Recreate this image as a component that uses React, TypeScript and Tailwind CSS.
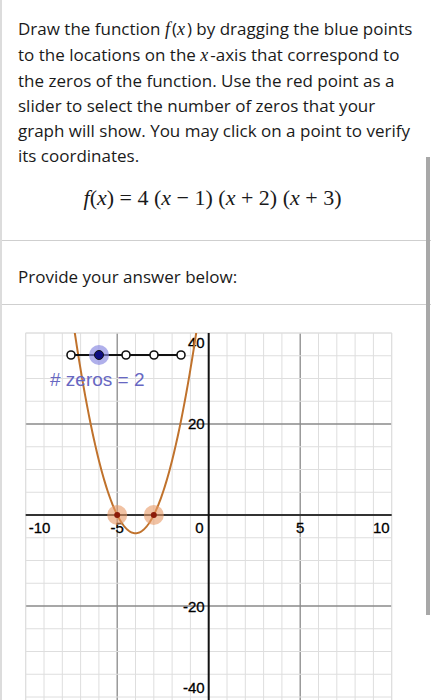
import React from "react";

const X0 = 206.7;
const UX = 18.3;
const Y0 = 515;
const UY = 4.55;

const px = (x: number) => X0 + x * UX;
const py = (y: number) => Y0 - y * UY;

const Var = ({ children }: { children: React.ReactNode }) => (
  <span className="pr-[2px] font-['Liberation_Serif',serif] text-[18px] italic">{children}</span>
);

const Graph = () => {
  const left = px(-10);
  const right = px(10);
  const top = py(40);
  const bottom = 705;

  const vLines = [];
  for (let i = -10; i <= 10; i++) {
    if (i === 0) continue;
    const major = i % 5 === 0 && Math.abs(i) !== 10;
    vLines.push(
      <line
        key={`v${i}`}
        x1={px(i)}
        x2={px(i)}
        y1={top}
        y2={bottom}
        stroke={major ? "#8a8a8a" : "#dedede"}
        strokeWidth={major ? 1.3 : 1}
      />,
    );
  }
  const hLines = [];
  for (let j = -45; j <= 40; j += 5) {
    if (j === 0) continue;
    const major = j % 20 === 0 && Math.abs(j) !== 40;
    hLines.push(
      <line
        key={`h${j}`}
        x1={left}
        x2={right}
        y1={py(j)}
        y2={py(j)}
        stroke={major ? "#8a8a8a" : "#dedede"}
        strokeWidth={major ? 1.3 : 1}
      />,
    );
  }

  const pts: string[] = [];
  for (let x = -7.4; x <= -0.6; x += 0.05) {
    const y = 4 * (x + 3) * (x + 5);
    pts.push(`${px(x).toFixed(2)},${py(y).toFixed(2)}`);
  }

  const sliderXs = [69, 97, 124, 152, 179];
  const label = "font-['Liberation_Sans',Arial,sans-serif]";

  return (
    <svg width="431" height="395" viewBox="0 305 431 395" className="block">
      <defs>
        <clipPath id="plot">
          <rect x={left} y={top} width={right - left} height={bottom - top} />
        </clipPath>
      </defs>
      {vLines}
      {hLines}
      <line x1={left} x2={left} y1={top} y2={bottom} stroke="#dedede" />
      <line x1={right} x2={right} y1={top} y2={bottom} stroke="#dedede" />
      <line x1={left} x2={right} y1={top} y2={top} stroke="#dedede" />
      <line x1={left} x2={right} y1={Y0} y2={Y0} stroke="#333" strokeWidth="2" />
      <line x1={X0} x2={X0} y1={top} y2={bottom} stroke="#111" strokeWidth="2" />

      <g className={label} fontSize="15" fill="#000" stroke="#000" strokeWidth="0.3">
        <text x={px(-10) + 3} y="533">-10</text>
        <text x={px(-5)} y="533" textAnchor="middle">-5</text>
        <text x={X0 - 5} y="533" textAnchor="end">0</text>
        <text x={px(5)} y="533" textAnchor="middle">5</text>
        <text x={px(10) - 2} y="533" textAnchor="end">10</text>
        <text x={X0 - 4} y="348" textAnchor="end">40</text>
        <text x={X0 - 4} y="429" textAnchor="end">20</text>
        <text x={X0 - 4} y="612" textAnchor="end">-20</text>
        <text x={X0 - 4} y="693" textAnchor="end">-40</text>
      </g>

      <polyline
        points={pts.join(" ")}
        fill="none"
        stroke="#c0722c"
        strokeWidth="2"
        clipPath="url(#plot)"
      />

      {[-5, -3].map((z) => (
        <g key={z}>
          <circle cx={px(z)} cy={Y0} r="10" fill="#e89a66" opacity="0.6" />
          <circle cx={px(z)} cy={Y0} r="3" fill="#8b1a08" />
        </g>
      ))}

      <line x1={69} x2={179} y1={355} y2={355} stroke="#111" strokeWidth="2" />
      {sliderXs.map((x, i) =>
        i === 1 ? (
          <g key={x}>
            <circle cx={x} cy={355} r="10" fill="#8585e0" opacity="0.65" />
            <circle cx={x} cy={355} r="4.5" fill="#0d0d80" stroke="#111" strokeWidth="1" />
          </g>
        ) : (
          <circle key={x} cx={x} cy={355} r="4" fill="#fff" stroke="#111" strokeWidth="1.6" />
        ),
      )}
      <text x="48" y="386" fontSize="19" fill="#6767c2" className={label}>
        # zeros = 2
      </text>
    </svg>
  );
};

export default function App() {
  return (
    <div className="relative h-[700px] w-[431px] overflow-hidden border-l-2 border-[#dcdcdc] bg-white font-['Open_Sans',sans-serif] text-[#1a1a1a]">
      <div className="px-[16px] pt-[16px] text-[17px] leading-[25px]">
        <p>
          Draw the function <Var>f</Var>(<Var>x</Var>) by dragging the blue points to the
          locations on the <Var>x</Var>-axis that correspond to the zeros of the function.
          Use the red point as a slider to select the number of zeros that your graph will
          show. You may click on a point to verify its coordinates.
        </p>
        <p className="mt-[17px] pr-[8px] text-center font-['Liberation_Serif',serif] text-[22px] leading-[26px]">
          <i>f</i>(<i>x</i>) = 4 (<i>x</i> − 1) (<i>x</i> + 2) (<i>x</i> + 3)
        </p>
      </div>
      <div className="mt-[29px] border-t border-[#cfcfcf]" />
      <div className="px-[16px] pt-[23px] pb-[15px] text-[17px] leading-[25px]">
        Provide your answer below:
      </div>
      <div className="border-t border-[#cfcfcf]" />
      <Graph />
      <div className="absolute right-[1px] top-[157px] h-[458px] w-[4px] bg-[#a8a8a8]" />
    </div>
  );
}
